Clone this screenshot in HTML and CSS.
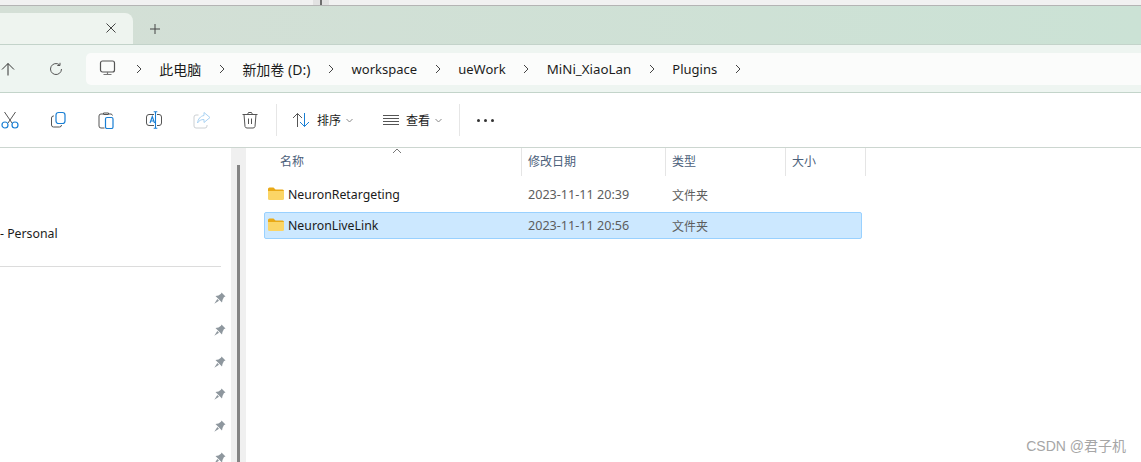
FILE: index.html
```html
<!DOCTYPE html>
<html lang="en">
<head>
    <meta charset="UTF-8">
    <meta name="viewport" content="width=device-width, initial-scale=1.0">
    <title>Plugins - File Explorer</title>
    <link rel="stylesheet" href="styles.css">
</head>
<body>
    <div class="topstrip"><span class="topstrip-mark"></span></div>

    <header class="titlebar">
        <div class="tab">
            <svg class="ico-tabclose" width="12" height="12" viewBox="0 0 12 12"><path d="M1.500 1.500l9 9M10.500 1.500l-9 9" stroke="#444" fill="none"/></svg>
        </div>
        <svg class="ico-plus" width="12" height="12" viewBox="0 0 12 12"><path d="M6 1v10M1 6h10" stroke="#444" fill="none"/></svg>
    </header>

    <div class="addressbar">
        <div class="nav-btn nav-up">
            <svg width="14" height="14" viewBox="0 0 14 14"><path d="M7 13.500V1.500M1 7.500l6-6 6 6" stroke="#333" fill="none"/></svg>
        </div>
        <div class="nav-btn nav-refresh">
            <svg width="14" height="14" viewBox="0 0 14 14"><path d="M12.500 7A5.500 5.500 0 1 1 10.500 2.800M11 .8v2.700H8.300" stroke="#555" fill="none"/></svg>
        </div>
        <nav class="crumbs">
            <svg class="ico-pc" width="17" height="17" viewBox="0 0 17 17"><rect x="1.500" y="1" width="14" height="11" rx="2" stroke="#555" stroke-width="1.200" fill="none"/><path d="M4.500 14.500h8M8.500 12v2.500" stroke="#777" stroke-width="1.200" fill="none"/></svg>
            <svg class="chev" width="6" height="10" viewBox="0 0 6 10"><path d="M1 1l4 4-4 4" stroke="#444" fill="none"/></svg>
            <span class="crumb-cjk">此电脑</span>
            <svg class="chev" width="6" height="10" viewBox="0 0 6 10"><path d="M1 1l4 4-4 4" stroke="#444" fill="none"/></svg>
            <span class="crumb-cjk">新加卷 (D:)</span>
            <svg class="chev" width="6" height="10" viewBox="0 0 6 10"><path d="M1 1l4 4-4 4" stroke="#444" fill="none"/></svg>
            <span>workspace</span>
            <svg class="chev" width="6" height="10" viewBox="0 0 6 10"><path d="M1 1l4 4-4 4" stroke="#444" fill="none"/></svg>
            <span>ueWork</span>
            <svg class="chev" width="6" height="10" viewBox="0 0 6 10"><path d="M1 1l4 4-4 4" stroke="#444" fill="none"/></svg>
            <span class="crumb-wide">MiNi_XiaoLan</span>
            <svg class="chev" width="6" height="10" viewBox="0 0 6 10"><path d="M1 1l4 4-4 4" stroke="#444" fill="none"/></svg>
            <span>Plugins</span>
            <svg class="chev" width="6" height="10" viewBox="0 0 6 10"><path d="M1 1l4 4-4 4" stroke="#444" fill="none"/></svg>
        </nav>
    </div>

    <div class="toolbar">
        <div class="tool">
            <svg width="18" height="18" viewBox="0 0 18 18"><path d="M3.500 1l7.500 11M14.500 1L7 12" stroke="#555" fill="none"/><circle cx="4" cy="14" r="3" stroke="#1a7fd4" stroke-width="1.200" fill="none"/><circle cx="14" cy="14" r="3" stroke="#1a7fd4" stroke-width="1.200" fill="none"/></svg>
        </div>
        <div class="tool">
            <svg width="18" height="18" viewBox="0 0 18 18"><path d="M5 5H4.500a2 2 0 0 0-2 2v7a2 2 0 0 0 2 2h6a2 2 0 0 0 2-2" stroke="#555" fill="none"/><rect x="7" y="1.500" width="9" height="11" rx="2.500" stroke="#1a7fd4" stroke-width="1.200" fill="none"/></svg>
        </div>
        <div class="tool">
            <svg width="18" height="18" viewBox="0 0 18 18"><path d="M6 3H4a2 2 0 0 0-2 2v10a2 2 0 0 0 2 2h3.500M12 3h2a2 2 0 0 1 1.500 1.500M6.500 3.500V2h5v1.500z" stroke="#555" fill="none"/><rect x="8.500" y="6.500" width="7.500" height="11" rx="1.500" stroke="#1a7fd4" stroke-width="1.200" fill="none"/></svg>
        </div>
        <div class="tool">
            <svg width="18" height="18" viewBox="0 0 18 18"><rect x="1.500" y="3.500" width="15" height="11" rx="2.500" stroke="#555" fill="none"/><rect x="9" y="1" width="3" height="16" fill="#fff"/><path d="M10.500 1v16M8.700 .8h3.600M8.700 17.200h3.600M5 12l2.300-6.500L9.500 12M5.800 10h3" stroke="#1a7fd4" stroke-width="1.100" fill="none"/></svg>
        </div>
        <div class="tool">
            <svg width="18" height="18" viewBox="0 0 18 18"><path d="M5.500 4H3a2 2 0 0 0-2 2v9a2 2 0 0 0 2 2h9a2 2 0 0 0 2-2v-1" stroke="#ccd0d3" fill="none"/><path d="M11 1.500l6 5-6 5V8.500C8 8.500 6 9.500 4.500 12c.5-4 3-7 6.500-7.500z" stroke="#a9d2f3" fill="none"/></svg>
        </div>
        <div class="tool">
            <svg width="18" height="18" viewBox="0 0 18 18"><path d="M1.500 3.500h15M6.500 3.500l1-2h3l1 2M3 3.500l1 12a2 2 0 0 0 2 1.500h6a2 2 0 0 0 2-1.500l1-12M7.500 7.500v5.500M10.500 7.500v5.500" stroke="#555" fill="none"/></svg>
        </div>
        <div class="tool-sep tool-sep-first"></div>
        <div class="tool-menu tool-sort">
            <svg width="18" height="16" viewBox="0 0 18 16"><path d="M5.500 15V1.500M1 6l4.500-4.500L10 6" stroke="#555" fill="none"/><path d="M12.500 1v13.500M8 10l4.500 4.500L17 10" stroke="#1a7fd4" fill="none"/></svg>
            <span class="tool-label">排序</span>
            <svg class="caret" width="7" height="5" viewBox="0 0 7 5"><path d="M.5 1l3 3 3-3" stroke="#888" fill="none"/></svg>
        </div>
        <div class="tool-menu tool-view">
            <svg width="16" height="12" viewBox="0 0 16 12"><path d="M0 1.500h16M0 4.500h16M0 7.500h16M0 10.500h16" stroke="#555" fill="none"/></svg>
            <span class="tool-label">查看</span>
            <svg class="caret" width="7" height="5" viewBox="0 0 7 5"><path d="M.5 1l3 3 3-3" stroke="#888" fill="none"/></svg>
        </div>
        <div class="tool-sep"></div>
        <div class="tool-more"><i></i><i></i><i></i></div>
    </div>

    <div class="content">
        <aside class="sidebar">
            <div class="side-account">- Personal</div>
            <div class="side-line"></div>
            <ul class="pins">
                <li><svg width="12" height="12" viewBox="0 0 12 12"><path d="M7.500 .5l4 4-1.500.5L8.500 8l-.5 2.500-6.500-6.500L4.500 3.500 7 1.800z M3.300 7L.3 11.700 5 8.700z" fill="#8e979e"/></svg></li>
                <li><svg width="12" height="12" viewBox="0 0 12 12"><path d="M7.500 .5l4 4-1.500.5L8.500 8l-.5 2.500-6.500-6.500L4.500 3.500 7 1.800z M3.300 7L.3 11.700 5 8.700z" fill="#8e979e"/></svg></li>
                <li><svg width="12" height="12" viewBox="0 0 12 12"><path d="M7.500 .5l4 4-1.500.5L8.500 8l-.5 2.500-6.500-6.500L4.500 3.500 7 1.800z M3.300 7L.3 11.700 5 8.700z" fill="#8e979e"/></svg></li>
                <li><svg width="12" height="12" viewBox="0 0 12 12"><path d="M7.500 .5l4 4-1.500.5L8.500 8l-.5 2.500-6.500-6.500L4.500 3.500 7 1.800z M3.300 7L.3 11.700 5 8.700z" fill="#8e979e"/></svg></li>
                <li><svg width="12" height="12" viewBox="0 0 12 12"><path d="M7.500 .5l4 4-1.500.5L8.500 8l-.5 2.500-6.500-6.500L4.500 3.500 7 1.800z M3.300 7L.3 11.700 5 8.700z" fill="#8e979e"/></svg></li>
                <li><svg width="12" height="12" viewBox="0 0 12 12"><path d="M7.500 .5l4 4-1.500.5L8.500 8l-.5 2.500-6.500-6.500L4.500 3.500 7 1.800z M3.300 7L.3 11.700 5 8.700z" fill="#8e979e"/></svg></li>
            </ul>
        </aside>
        <div class="side-scroll"><div class="side-thumb"></div></div>

        <main class="files">
            <div class="file-head">
                <svg class="sort-caret" width="10" height="6" viewBox="0 0 10 6"><path d="M1 5l4-4 4 4" stroke="#777" fill="none"/></svg>
                <div class="col col-name">名称</div>
                <div class="col col-date">修改日期</div>
                <div class="col col-type">类型</div>
                <div class="col col-size">大小</div>
            </div>
            <div class="file-row">
                <div class="cell-name">
                    <svg class="folder" width="16" height="13" viewBox="0 0 16 13"><path d="M0 2a1.500 1.500 0 0 1 1.500-1.500h4L7.500 2.500H14.500A1.500 1.500 0 0 1 16 4v1H0z" fill="#e9a916"/><path d="M0 4h16V11.500a1.500 1.500 0 0 1-1.500 1.500h-13A1.500 1.500 0 0 1 0 11.500z" fill="#fbd566"/></svg>
                    <span>NeuronRetargeting</span>
                </div>
                <div class="cell cell-date">2023-11-11 20:39</div>
                <div class="cell cell-type">文件夹</div>
            </div>
            <div class="file-row selected">
                <div class="cell-name">
                    <svg class="folder" width="16" height="13" viewBox="0 0 16 13"><path d="M0 2a1.500 1.500 0 0 1 1.500-1.500h4L7.500 2.500H14.500A1.500 1.500 0 0 1 16 4v1H0z" fill="#e9a916"/><path d="M0 4h16V11.500a1.500 1.500 0 0 1-1.500 1.500h-13A1.500 1.500 0 0 1 0 11.500z" fill="#fbd566"/></svg>
                    <span>NeuronLiveLink</span>
                </div>
                <div class="cell cell-date">2023-11-11 20:56</div>
                <div class="cell cell-type">文件夹</div>
            </div>
        </main>
    </div>

    <div class="watermark">CSDN @君子机</div>
</body>
</html>
```

FILE: styles.css
```css
* {
    margin: 0;
    padding: 0;
    box-sizing: border-box;
}

html, body {
    width: 1141px;
    height: 462px;
    overflow: hidden;
}

body {
    position: relative;
    background-color: #fff;
    color: #1c1c1c;
    font-family: "Noto Sans", "Noto Sans CJK SC", sans-serif;
    font-size: 13px;
}

svg {
    display: block;
    flex: none;
}

/* sliver of the window behind */
.topstrip {
    height: 6px;
    background-color: #f1f1f1;
    border-bottom: 1px solid #b4b4b4;
    padding-left: 313px;
}

.topstrip-mark {
    display: block;
    width: 16px;
    height: 5px;
    border-left: 7px solid #e2e2e2;
    border-right: 7px solid #e2e2e2;
    background-color: #6e6e6e;
}

.titlebar {
    display: flex;
    align-items: flex-end;
    height: 39px;
    background: linear-gradient(90deg, #d4dfd6, #cbe2d5);
    border-bottom: 1px solid #c3d3ca;
}

.tab {
    display: flex;
    align-items: center;
    justify-content: flex-end;
    width: 133px;
    height: 31px;
    padding-right: 16px;
    padding-bottom: 1px;
    background-color: #eef4ef;
    border-top-right-radius: 8px;
}

.ico-plus {
    margin-left: 16px;
    margin-bottom: 9px;
}

.addressbar {
    display: flex;
    align-items: center;
    height: 48px;
    background-color: #eef5f1;
    border-bottom: 1px solid #c3d4ca;
}

.nav-btn {
    display: flex;
    justify-content: center;
    width: 48px;
}

.nav-up {
    margin-left: -16px;
}

.crumbs {
    display: flex;
    flex: 1;
    align-items: center;
    gap: 17.6px;
    height: 32px;
    margin-left: 6px;
    padding-left: 13px;
    background-color: #fbfcfb;
    border-radius: 5px 0 0 5px;
    white-space: nowrap;
}

.crumb-cjk {
    font-size: 14px;
}

.crumb-wide {
    font-size: 13.3px;
}

.ico-pc {
    margin-right: 2px;
}

.toolbar {
    display: flex;
    align-items: center;
    height: 55px;
    margin-left: -14px;
    background-color: #fff;
    border-bottom: 1px solid #ccd6d0;
}

.tool {
    display: flex;
    justify-content: center;
    width: 48px;
}

.tool-sep {
    width: 1px;
    height: 32px;
    background-color: #e6e6e6;
}

.tool-sep-first {
    margin-left: 2px;
}

.tool-menu {
    display: flex;
    align-items: center;
    font-size: 12px;
}

.tool-sort {
    margin-left: 15px;
}

.tool-view {
    margin-left: 30px;
    margin-right: 17px;
}

.tool-label {
    margin-left: 7px;
    margin-right: 5px;
}

.tool-more {
    display: flex;
    gap: 4px;
    margin-left: 17px;
}

.tool-more i {
    width: 3px;
    height: 3px;
    border-radius: 50%;
    background-color: #333;
}

.content {
    display: flex;
    height: 314px;
}

.sidebar {
    width: 231px;
    padding-top: 77px;
    overflow: hidden;
}

.side-account {
    height: 18px;
    line-height: 18px;
    font-size: 12.3px;
    white-space: nowrap;
}

.side-line {
    width: 221px;
    height: 1px;
    margin-top: 23px;
    background-color: #dcdcdc;
}

.pins {
    display: flex;
    flex-direction: column;
    align-items: flex-end;
    gap: 20px;
    margin-top: 25px;
    padding-right: 5px;
    list-style: none;
}

.side-scroll {
    width: 15px;
    padding-top: 17px;
    padding-left: 6px;
    background-color: #f0f0f0;
}

.side-thumb {
    width: 3px;
    height: 100%;
    background-color: #858585;
}

.files {
    position: relative;
    flex: 1;
    padding-left: 18px;
}

.file-head {
    display: flex;
    height: 28px;
    color: #4c607a;
    font-size: 12px;
    line-height: 27px;
}

.sort-caret {
    position: absolute;
    left: 146px;
    top: 0;
}

.col {
    padding-left: 6px;
    border-right: 1px solid #e5e5e5;
}

.col-name {
    width: 258px;
    padding-left: 16px;
}

.col-date {
    width: 144px;
}

.col-type {
    width: 120px;
}

.col-size {
    width: 80px;
}

.file-row {
    display: flex;
    align-items: center;
    width: 598px;
    height: 27px;
    margin-top: 5px;
    border: 1px solid transparent;
    border-radius: 2px;
    color: #5d5d5d;
    font-size: 12px;
}

.file-row + .file-row {
    margin-top: 4px;
}

.file-row.selected {
    background-color: #cce8ff;
    border-color: #99d1ff;
}

.cell-name {
    display: flex;
    align-items: center;
    gap: 4px;
    width: 257px;
    padding-left: 3px;
    color: #1a1a1a;
    font-size: 12.3px;
}

.folder {
    margin-top: -2px;
}

.cell-date {
    width: 144px;
    padding-left: 6px;
    font-size: 12.6px;
}

.cell-type {
    padding-left: 6px;
}

.watermark {
    position: absolute;
    right: 15px;
    bottom: 7px;
    color: #a6a6a6;
    font-family: "Liberation Sans", "Noto Sans CJK SC", sans-serif;
    font-size: 14px;
}
```
